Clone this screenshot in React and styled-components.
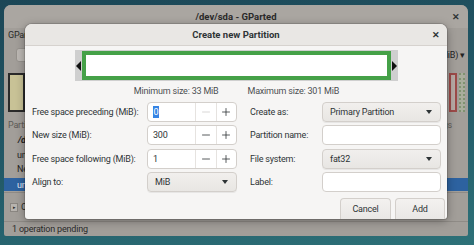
import * as React from 'react'
import styled, { createGlobalStyle } from 'styled-components'
import { Minus, Plus } from 'lucide-react'

const GlobalStyle = createGlobalStyle`
  body {
    margin: 0;
    font-family: Roboto, "Noto Sans", sans-serif;
    color: #2e3436;
  }
`

const Desktop = styled.div`
  position: relative;
  width: 474px;
  height: 245px;
  overflow: hidden;
  box-sizing: border-box;
  padding: 5px 6px 9px 4px;
  background: linear-gradient(170deg, #1b4656 0%, #235a68 55%, #2d7178 100%);
`

const MainWindow = styled.div`
  height: 100%;
  display: flex;
  flex-direction: column;
  background: #a29e99;
  border-radius: 7px 7px 2px 2px;
  overflow: hidden;
  font-size: 9px;
  letter-spacing: -0.2px;
  color: #2a2a2a;
  white-space: nowrap;
`

const WinTitle = styled.div`
  position: relative;
  flex: 0 0 23px;
  display: flex;
  align-items: center;
  justify-content: center;
  background: #aaa6a1;
  font-weight: 700;
  font-size: 9.5px;
  letter-spacing: 0;
`

const CloseMark = styled.span`
  position: absolute;
  right: ${p => p.$right}px;
  top: 50%;
  transform: translateY(-50%);
  font-size: 9px;
  font-weight: 700;
  color: #2e3436;
`

const MenuBar = styled.div`
  flex: 0 0 14px;
  display: flex;
  align-items: center;
  padding-left: 4px;
`

const ToolBar = styled.div`
  flex: 0 0 26px;
  display: flex;
  align-items: center;
  justify-content: space-between;
  padding: 0 3px 0 12px;
`

const ToolButton = styled.div`
  width: 10px;
  height: 12px;
  border-radius: 3px;
  background: #bcb8b3;
  border: 1px solid #96928d;
`

const DevicePicker = styled.div`
  color: #222;
`

const DiskMap = styled.div`
  flex: 0 0 46px;
  display: flex;
  align-items: flex-end;
  justify-content: space-between;
  padding: 0 3px 2px 4px;
  box-sizing: border-box;
`

const DiskPart = styled.div`
  width: ${p => p.$w}px;
  height: 39px;
  box-sizing: border-box;
  border: 2px ${p => (p.$dotted ? 'dotted' : 'solid')} ${p => p.$border};
  background: ${p => p.$bg};
`

const DiskRight = styled.div`
  display: flex;
  gap: 2px;
`

const ListHead = styled.div`
  flex: 0 0 14px;
  margin-top: 4px;
  display: flex;
  align-items: center;
  justify-content: space-between;
  padding: 0 16px 0 4px;
  color: #5d5a56;
`

const ListRow = styled.div`
  flex: 0 0 ${p => p.$h}px;
  margin-top: ${p => (p.$selected ? 2 : 0)}px;
  display: flex;
  align-items: center;
  padding-left: ${p => p.$indent}px;
  background: ${p => (p.$selected ? '#2d62a0' : 'transparent')};
  color: ${p => (p.$selected ? '#e8eef6' : '#222')};
  font-weight: ${p => (p.$bold ? 700 : 400)};
  font-style: ${p => (p.$bold ? 'italic' : 'normal')};
`

const Pending = styled.div`
  flex: 0 0 29px;
  margin-top: 1px;
  display: flex;
  align-items: center;
  gap: 3px;
  padding-left: 6px;
  border-top: 1px solid #8f8b86;
  box-sizing: border-box;
`

const Expander = styled.span`
  width: 6px;
  height: 7px;
  border: 1px solid #8a8681;
  background: #b8b4af;
  font-size: 5px;
  display: flex;
  align-items: center;
  justify-content: center;
`

const StatusBar = styled.div`
  flex: 1;
  display: flex;
  align-items: center;
  padding-left: 8px;
  border-top: 1px solid #8f8b86;
`

/* dialog */

const Dialog = styled.div`
  position: absolute;
  left: 25px;
  top: 24px;
  width: 422px;
  height: 195px;
  display: flex;
  flex-direction: column;
  background: #f6f5f4;
  border-radius: 7px 7px 3px 3px;
  box-shadow: 0 2px 10px rgba(0, 0, 0, 0.35), 0 0 0 1px rgba(0, 0, 0, 0.12);
  overflow: hidden;
  font-size: 9px;
  letter-spacing: -0.2px;
  color: #2e3436;
  white-space: nowrap;
`

const DialogTitle = styled.div`
  position: relative;
  flex: 0 0 21px;
  display: flex;
  align-items: center;
  justify-content: center;
  background: #e9e7e4;
  border-bottom: 1px solid #d6d2ce;
  font-weight: 700;
  font-size: 9.5px;
  letter-spacing: 0;
`

const DialogBody = styled.div`
  flex: 1;
  display: flex;
  flex-direction: column;
  padding: 4px 2px 0 7px;
`

const PartitionBar = styled.div`
  margin-left: 43px;
  width: 323px;
  height: 31px;
  display: flex;
  align-items: center;
  justify-content: space-between;
  background: #cfcfcf;
`

const Arrow = styled.div`
  width: 0;
  height: 0;
  border-top: 5px solid transparent;
  border-bottom: 5px solid transparent;
  ${p => (p.$dir === 'left' ? 'border-right: 5px solid #111;' : 'border-left: 5px solid #111;')}
  margin: 0 1px;
`

const GreenBox = styled.div`
  flex: 1;
  align-self: stretch;
  margin: 1px 0;
  box-sizing: border-box;
  border: 4px solid #45a148;
  background: #ffffff;
`

const SizeInfo = styled.div`
  display: flex;
  justify-content: center;
  gap: 29px;
  margin: 5px 0;
  padding-right: 4px;
  height: 11px;
  line-height: 11px;
  color: #4c4f52;
`

const Form = styled.div`
  display: grid;
  grid-template-columns: 115px 90px 85px 119px;
  row-gap: 3.4px;
  & > :nth-child(4n + 3) {
    margin-left: 13px;
  }
`

const Label = styled.div`
  height: 20px;
  display: flex;
  align-items: center;
`

const SpinBox = styled.div`
  height: 20px;
  box-sizing: border-box;
  display: flex;
  border: 1px solid #d3cfcb;
  border-radius: 4px;
  background: #ffffff;
`

const SpinValue = styled.div`
  width: 47px;
  display: flex;
  align-items: center;
  padding-left: 5px;
  box-sizing: border-box;
`

const Selected = styled.span`
  background: #3584e4;
  color: #ffffff;
  line-height: 12px;
  padding: 0 0.5px;
`

const SpinButton = styled.div`
  flex: 1;
  display: flex;
  align-items: center;
  justify-content: center;
  border-left: 1px solid #e6e3e0;
  color: ${p => (p.$disabled ? '#cfcdcb' : '#2e3436')};
`

const Combo = styled.div`
  height: 20px;
  box-sizing: border-box;
  display: flex;
  align-items: center;
  justify-content: space-between;
  padding: 0 8px 0 7px;
  border: 1px solid #d3cfcb;
  border-radius: 4px;
  background: linear-gradient(#f1efed, #e8e6e3);
  box-shadow: 0 1px 0 rgba(0, 0, 0, 0.06);
`

const Caret = styled.span`
  width: 0;
  height: 0;
  border-left: 3.5px solid transparent;
  border-right: 3.5px solid transparent;
  border-top: 4px solid #2e3436;
`

const Entry = styled.div`
  height: 20px;
  box-sizing: border-box;
  border: 1px solid #d3cfcb;
  border-radius: 4px;
  background: #ffffff;
`

const Actions = styled.div`
  margin-top: auto;
  display: flex;
  justify-content: flex-end;
  gap: 4px;
`

const Button = styled.div`
  width: ${p => p.$w}px;
  height: 21px;
  box-sizing: border-box;
  display: flex;
  align-items: center;
  justify-content: center;
  border: 1px solid #d3cfcb;
  border-bottom: none;
  border-radius: 4px 4px 0 0;
  background: linear-gradient(#f3f1ef, #e9e7e5);
`

function Spin({ value, selected, minusDisabled }) {
  return (
    <SpinBox>
      <SpinValue>{selected ? <Selected>{value}</Selected> : value}</SpinValue>
      <SpinButton $disabled={minusDisabled}>
        <Minus size={12} strokeWidth={1.6} />
      </SpinButton>
      <SpinButton>
        <Plus size={12} strokeWidth={1.6} />
      </SpinButton>
    </SpinBox>
  )
}

function Select({ value }) {
  return (
    <Combo>
      <span>{value}</span>
      <Caret />
    </Combo>
  )
}

export default function App() {
  return (
    <Desktop>
      <GlobalStyle />
      <MainWindow>
        <WinTitle>
          <span>/dev/sda - GParted</span>
          <CloseMark $right={8}>✕</CloseMark>
        </WinTitle>
        <MenuBar>GParted</MenuBar>
        <ToolBar>
          <ToolButton />
          <DevicePicker>(512 MiB) ▾</DevicePicker>
        </ToolBar>
        <DiskMap>
          <DiskPart $w={17} $border="#2a2a2a" $bg="#c8c296" />
          <DiskRight>
            <DiskPart $w={8} $border="#9c4a48" $bg="#b7a9a4" />
            <DiskPart $w={6} $border="#7f9270" $bg="#a9ad9c" $dotted />
          </DiskRight>
        </DiskMap>
        <ListHead>
          <span>Partition</span>
          <span>Flags</span>
        </ListHead>
        <ListRow $h={15} $indent={14} $bold>/dev/sda1</ListRow>
        <ListRow $h={15} $indent={13}>unallocated</ListRow>
        <ListRow $h={14} $indent={13}>New Partition #1</ListRow>
        <ListRow $h={13} $indent={13} $selected>unallocated</ListRow>
        <Pending>
          <Expander>▸</Expander>
          <span>Create Primary Partition</span>
        </Pending>
        <StatusBar>1 operation pending</StatusBar>
      </MainWindow>

      <Dialog>
        <DialogTitle>
          <span>Create new Partition</span>
          <CloseMark $right={7}>✕</CloseMark>
        </DialogTitle>
        <DialogBody>
          <PartitionBar>
            <Arrow $dir="left" />
            <GreenBox />
            <Arrow $dir="right" />
          </PartitionBar>
          <SizeInfo>
            <span>Minimum size: 33 MiB</span>
            <span>Maximum size: 301 MiB</span>
          </SizeInfo>
          <Form>
            <Label>Free space preceding (MiB):</Label>
            <Spin value="0" selected minusDisabled />
            <Label>Create as:</Label>
            <Select value="Primary Partition" />

            <Label>New size (MiB):</Label>
            <Spin value="300" />
            <Label>Partition name:</Label>
            <Entry />

            <Label>Free space following (MiB):</Label>
            <Spin value="1" />
            <Label>File system:</Label>
            <Select value="fat32" />

            <Label>Align to:</Label>
            <Select value="MiB" />
            <Label>Label:</Label>
            <Entry />
          </Form>
          <Actions>
            <Button $w={51}>Cancel</Button>
            <Button $w={50}>Add</Button>
          </Actions>
        </DialogBody>
      </Dialog>
    </Desktop>
  )
}
